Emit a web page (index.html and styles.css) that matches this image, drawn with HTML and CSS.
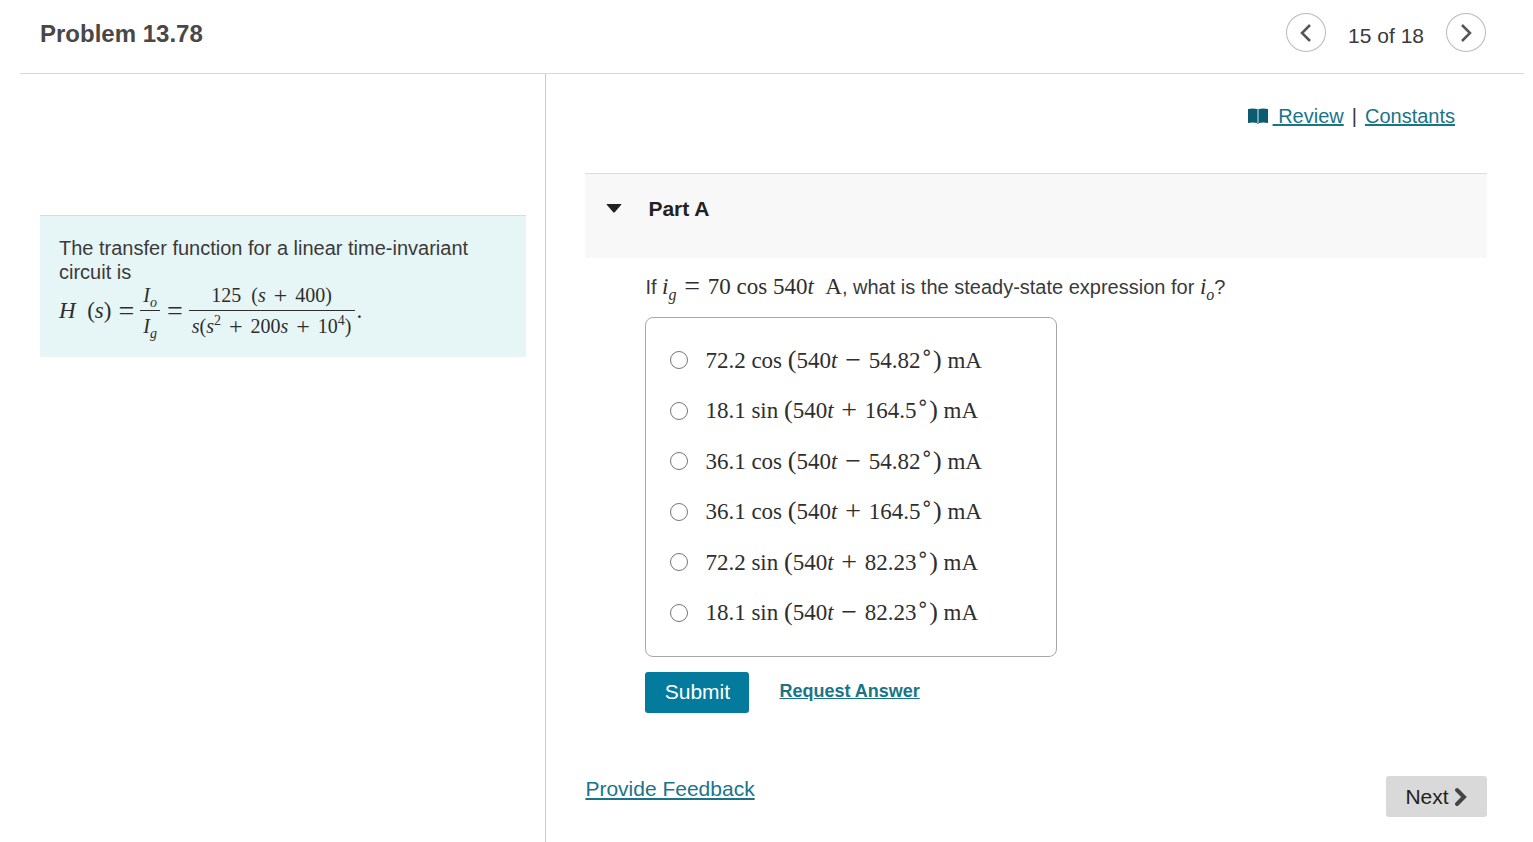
FILE: index.html
```html
<!DOCTYPE html>
<html lang="en">
<head>
    <meta charset="UTF-8">
    <meta name="viewport" content="width=device-width, initial-scale=1.0">
    <title>Problem 13.78</title>
    <link rel="stylesheet" href="styles.css">
</head>
<body>

    <header class="top-bar">
        <h1>Problem 13.78</h1>
        <nav class="pager">
            <button type="button" class="round-btn" aria-label="Previous">
                <svg width="12" height="20" viewBox="0 0 12 20"><path d="M10 2 L2 10 L10 18" /></svg>
            </button>
            <span class="count">15 of 18</span>
            <button type="button" class="round-btn" aria-label="Next">
                <svg width="12" height="20" viewBox="0 0 12 20"><path d="M2 2 L10 10 L2 18" /></svg>
            </button>
        </nav>
    </header>

    <main class="columns">
        <section class="left">
            <div class="intro">
                <p>The transfer function for a linear time-invariant circuit is</p>
                <div class="equation math">
                    <span><i>H</i> &nbsp;(<i>s</i>)</span>
                    <span class="eq">=</span>
                    <span class="frac">
                        <span class="num"><i>I<sub>o</sub></i></span>
                        <span class="den"><i>I<sub>g</sub></i></span>
                    </span>
                    <span class="eq">=</span>
                    <span class="frac">
                        <span class="num">125 &nbsp;(<i>s</i> <span class="op">+</span> 400)</span>
                        <span class="den"><i>s</i>(<i>s</i><sup>2</sup> <span class="op">+</span> 200<i>s</i> <span class="op">+</span> 10<sup>4</sup>)</span>
                    </span>
                    <span class="dot">.</span>
                </div>
            </div>
        </section>

        <section class="right">
            <div class="links">
                <svg width="20" height="16" viewBox="0 0 20 16">
                    <path d="M0 1 Q5 0 9 1 V15 Q5 14 0 15 Z M11 1 Q15 0 20 1 V15 Q15 14 11 15 Z" fill="#0b5c70" />
                    <path d="M9 1 H11 V16 H9 Z" fill="#6fa3ae" />
                </svg>
                <a href="#">&nbsp;Review</a>
                <span class="bar">|</span>
                <a href="#">Constants</a>
            </div>

            <div class="part-header">
                <svg width="16" height="9" viewBox="0 0 16 9"><path d="M1 0 H15 Q16 0 15 1 L9 8 Q8 9 7 8 L1 1 Q0 0 1 0 Z" fill="#222" /></svg>
                <h2>Part A</h2>
            </div>

            <form class="part-body">
                <p class="question">If <span class="math"><i>i<sub>g</sub></i> <span class="op">=</span> 70 cos 540<i>t</i> &nbsp;A</span>, what is the steady-state expression for <span class="math"><i>i<sub>o</sub></i></span>?</p>

                <div class="options">
                    <label class="math"><input type="radio" name="answer"><span>72.2 cos <b>(</b>540<i>t</i> <span class="op">−</span> 54.82<sup class="deg">∘</sup><b>)</b> mA</span></label>
                    <label class="math"><input type="radio" name="answer"><span>18.1 sin <b>(</b>540<i>t</i> <span class="op">+</span> 164.5<sup class="deg">∘</sup><b>)</b> mA</span></label>
                    <label class="math"><input type="radio" name="answer"><span>36.1 cos <b>(</b>540<i>t</i> <span class="op">−</span> 54.82<sup class="deg">∘</sup><b>)</b> mA</span></label>
                    <label class="math"><input type="radio" name="answer"><span>36.1 cos <b>(</b>540<i>t</i> <span class="op">+</span> 164.5<sup class="deg">∘</sup><b>)</b> mA</span></label>
                    <label class="math"><input type="radio" name="answer"><span>72.2 sin <b>(</b>540<i>t</i> <span class="op">+</span> 82.23<sup class="deg">∘</sup><b>)</b> mA</span></label>
                    <label class="math"><input type="radio" name="answer"><span>18.1 sin <b>(</b>540<i>t</i> <span class="op">−</span> 82.23<sup class="deg">∘</sup><b>)</b> mA</span></label>
                </div>

                <div class="actions">
                    <button type="submit" class="submit">Submit</button>
                    <a href="#">Request Answer</a>
                </div>
            </form>

            <footer class="bottom">
                <a href="#">Provide Feedback</a>
                <button type="button" class="next">Next
                    <svg width="14" height="20" viewBox="0 0 14 20"><path d="M3 3 L10 10 L3 17" /></svg>
                </button>
            </footer>
        </section>
    </main>

</body>
</html>
```

FILE: styles.css
```css
* {
    box-sizing: border-box;
}

body {
    margin: 0;
    padding: 0 9px 0 20px;
    min-height: 100vh;
    display: flex;
    flex-direction: column;
    font-family: "Liberation Sans", Arial, sans-serif;
    font-size: 20px;
    line-height: 24px;
    color: #3a3a3a;
    background: #fff;
}

h1, h2, p {
    margin: 0;
}

a {
    color: #1a7488;
}

button {
    font-family: inherit;
    cursor: pointer;
}

.top-bar {
    display: flex;
    justify-content: space-between;
    height: 74px;
    padding: 13px 38px 0 20px;
    border-bottom: 1px solid #d9d9d9;
}

.top-bar h1 {
    font-size: 24px;
    line-height: 42px;
    color: #484848;
}

.pager {
    display: flex;
    align-items: flex-start;
    gap: 22px;
}

.count {
    font-size: 21px;
    line-height: 46px;
}

.round-btn {
    display: flex;
    align-items: center;
    justify-content: center;
    width: 40px;
    height: 39px;
    padding: 0;
    border: 1px solid #bbb;
    border-radius: 50%;
    background: #fff;
}

.round-btn path,
.next path {
    fill: none;
    stroke: #555;
    stroke-width: 2.5;
}

/* two columns */
.columns {
    flex: 1;
    display: grid;
    grid-template-columns: 35% 1fr;
}

.left {
    padding: 141px 19px 0 20px;
    border-right: 1px solid #b4d2d9;
}

.intro {
    padding: 20px 20px 16px 19px;
    border-top: 1px solid #cfdfdf;
    background: #e6f5f6;
}

/* math */
.math {
    font-family: "Liberation Serif", "Times New Roman", serif;
    font-size: 23px;
    color: #2e2e2e;
}

.math sub,
.math sup {
    font-size: 16px;
    line-height: 0;
}

.math .op {
    margin: 0 2px;
    font-size: 28px;
    line-height: 0;
    vertical-align: -1px;
}

.equation {
    display: flex;
    align-items: center;
    padding-bottom: 4px;
    line-height: 26px;
}

.equation .eq {
    margin: 0 6px 0 7px;
    font-size: 28px;
}

.frac {
    display: flex;
    flex-direction: column;
    text-align: center;
    font-size: 20px;
}

.frac sub,
.frac sup {
    font-size: 14px;
}

.math .frac .op {
    margin: 0 3px;
    font-size: 24px;
}

.num {
    padding: 0 3px 4px;
    border-bottom: 1px solid #2e2e2e;
    line-height: 22px;
}

.den {
    padding: 4px 3px 0;
    line-height: 22px;
}

.dot {
    margin-left: 2px;
}

/* right side */
.right {
    padding: 30px 37px 25px 39px;
}

.links {
    display: flex;
    align-items: center;
    justify-content: flex-end;
    padding-right: 32px;
}

.links .bar {
    margin: 0 8px;
}

.links svg {
    margin-right: 5px;
}

.part-header {
    display: flex;
    gap: 26px;
    height: 85px;
    margin-top: 45px;
    padding: 23px 21px;
    border-top: 1px solid #dcdcdc;
    background: #f8f8f8;
}

.part-header svg {
    margin-top: 7px;
}

.part-header h2 {
    font-size: 21px;
    color: #222;
}

.part-body {
    padding: 16px 0 0 60px;
}

.question {
    line-height: 26px;
}

.options {
    display: grid;
    grid-auto-rows: 1fr;
    width: 412px;
    max-width: 100%;
    min-height: 340px;
    margin-top: 17px;
    padding: 17px 24px 18px;
    border: 1px solid #a8a8a8;
    border-radius: 8px;
}

.options label {
    display: flex;
    align-items: center;
    gap: 17px;
}

.options input {
    width: 18px;
    height: 18px;
    margin: 0;
}

.options b {
    font-size: 26px;
    font-weight: normal;
    line-height: 24px;
}

.math .deg {
    font-family: "DejaVu Sans", sans-serif;
    font-size: 20px;
}

.actions {
    display: flex;
    gap: 30px;
    margin-top: 15px;
}

.actions a {
    font-size: 18px;
    line-height: 38px;
    font-weight: bold;
}

.submit {
    width: 104px;
    height: 41px;
    padding: 0 0 2px;
    border: none;
    border-radius: 3px;
    font-size: 21px;
    color: #fff;
    background: #047a9c;
}

.bottom {
    display: flex;
    justify-content: space-between;
    margin-top: 63px;
    font-size: 21px;
    line-height: 26px;
}

.next {
    display: flex;
    align-items: center;
    justify-content: center;
    gap: 5px;
    width: 101px;
    height: 41px;
    border: none;
    border-radius: 3px;
    font-size: 21px;
    color: #222;
    background: #d9d9d9;
}

.next path {
    stroke: #444;
    stroke-width: 4;
    stroke-linecap: round;
}
```
